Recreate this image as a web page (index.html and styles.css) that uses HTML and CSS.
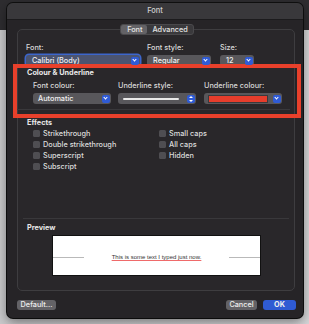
FILE: index.html
```html
<!doctype html>
<html>
<head>
<meta charset="utf-8">
<title>Font</title>
<link rel="stylesheet" href="styles.css">
</head>
<body>
<div class="window">
	<div class="titlebar">Font</div>
	<div class="content">
		<div class="tabs">
			<span class="tab on">Font</span>
			<span class="tab">Advanced</span>
		</div>
		<div class="panel">
			<div class="fonts">
				<div class="field f-font">
					<div class="label">Font:</div>
					<div class="popup focus"><span>Calibri (Body)</span><i class="chev"></i></div>
				</div>
				<div class="field f-style">
					<div class="label">Font style:</div>
					<div class="popup"><span>Regular</span><i class="chev"></i></div>
				</div>
				<div class="field f-size">
					<div class="label">Size:</div>
					<div class="popup"><span>12</span><i class="chev"></i></div>
				</div>
			</div>

			<div class="colour">
				<div class="head">Colour &amp; Underline</div>
				<div class="cols">
					<div class="field">
						<div class="label">Font colour:</div>
						<div class="popup"><span>Automatic</span><i class="chev"></i></div>
					</div>
					<div class="field">
						<div class="label">Underline style:</div>
						<div class="popup"><b class="uline"></b><i class="step"></i></div>
					</div>
					<div class="field">
						<div class="label">Underline colour:</div>
						<div class="popup"><b class="swatch"></b><i class="chev"></i></div>
					</div>
				</div>
				<div class="sep"></div>
			</div>

			<div class="head">Effects</div>
			<div class="effects">
				<ul>
					<li><i class="cb"></i>Strikethrough</li>
					<li><i class="cb"></i>Double strikethrough</li>
					<li><i class="cb"></i>Superscript</li>
					<li><i class="cb"></i>Subscript</li>
				</ul>
				<ul>
					<li><i class="cb"></i>Small caps</li>
					<li><i class="cb"></i>All caps</li>
					<li><i class="cb"></i>Hidden</li>
				</ul>
			</div>

			<div class="sep wide"></div>
			<div class="head">Preview</div>
			<div class="preview">
				<i class="rule"></i>
				<span class="sample">This is some text I typed just now.</span>
				<i class="rule"></i>
			</div>
		</div>
		<div class="buttons">
			<span class="btn">Default...</span>
			<span class="spacer"></span>
			<span class="btn">Cancel</span>
			<span class="btn ok">OK</span>
		</div>
	</div>
</div>
</body>
</html>
```

FILE: styles.css
```css
*{ margin:0; padding:0; box-sizing:border-box; list-style:none;}
html,body{ height:100%;}
body{ background:linear-gradient(90deg,#c9c9cb 0,#d6d6d8 100%); font-family:"Inter","Liberation Sans",sans-serif; font-size:7.3px; font-weight:500; color:#dedede; padding:3px 6px 0 7px; overflow:hidden; position:relative;}
body:before{ content:""; position:absolute; left:0; top:0; right:0; height:30px; background:#2e2d30; z-index:0;}

.window{ position:relative; z-index:1; width:296px; height:315px; background:#262427; border-radius:6px; box-shadow:0 4px 12px rgba(0,0,0,.45), 0 0 0 1px #111; overflow:hidden; display:flex; flex-direction:column;}
.titlebar{ height:17px; line-height:16px; background:#39383b; text-align:center; color:#cfcfcf; font-size:7.5px; border-bottom:1px solid #1c1b1d;}
.content{ flex:1; padding:0 8px 0 10px; display:flex; flex-direction:column;}

.tabs{ position:relative; z-index:2; align-self:center; margin:4px 0 0 2px; display:flex; height:11px; background:#3a393c; border:1px solid #4a494c; border-radius:3px;}
.tab{ padding:0 5px; line-height:9px; color:#e4e4e4;}
.tab.on{ background:#636266; border-radius:2px; padding:0 5px 0 6px;}

.panel{ margin-top:-6px; height:262px; border:1px solid #3e3d40; border-radius:5px; background:#29272a; padding:13px 9px 0 9px;}

.label{ height:9px; line-height:9px; margin-bottom:3px; color:#d9d9d9;}
.popup{ height:11px; border-radius:3px; background:#58575b; display:flex; align-items:center; padding:0 1.5px 0 6px; color:#f0f0f0;}
.popup span{ flex:1; white-space:nowrap;}
.popup.focus{ background:#4b5470; box-shadow:0 0 0 1.5px #3c66cc;}
.chev{ width:8px; height:8px; border-radius:2px; background:#2f5bd6; position:relative;}
.chev:after{ content:""; position:absolute; left:2.5px; top:1.5px; width:2px; height:2px; border-right:1px solid #fff; border-bottom:1px solid #fff; transform:rotate(45deg);}

.fonts{ display:flex; margin-left:-1px;}
.f-font{ width:114px;}
.f-style{ width:64px; margin-left:7px;}
.f-size{ width:34px; margin-left:9px;}

.colour{ margin:2px -12px 0 -10px; height:46px; outline:4px solid #e8402b; padding:0 0 0 10px;}
.head{ height:9px; line-height:9px; font-weight:bold; color:#e8e8e8;}
.colour .head{ margin-bottom:4px;}
.cols{ display:flex; padding-left:6px;}
.cols .field{ width:78px; margin-right:8px;}
.cols .field:first-child{ margin-right:7px;}
.cols .popup{ padding-left:5px;}
.uline{ flex:1; height:2px; background:#e9e9e9; margin-right:8px; border-radius:1px;}
.swatch{ flex:1; height:6px; background:#e63d2c; margin:0 6px 0 0; outline:1px solid #3a393c;}
.step{ width:8px; height:8px; border-radius:2px; background:#2f5bd6; position:relative;}
.step:before,.step:after{ content:""; position:absolute; left:2px; border-left:2px solid transparent; border-right:2px solid transparent;}
.step:before{ top:1px; border-bottom:2px solid #fff;}
.step:after{ bottom:1px; border-top:2px solid #fff;}
.sep{ height:1px; background:#39383b; margin:5px 7px 0 -10px;}

.colour + .head{ margin-top:4px;}
.effects{ display:flex; padding:1px 0 0 6px; height:91px;}
.effects ul{ width:128px;}
.effects li{ height:11px; display:flex; align-items:center; color:#dcdcdc; white-space:nowrap;}
.cb{ width:7px; height:7px; border-radius:1.5px; background:#4f4e52; margin-right:3px;}

.sep.wide{ margin:0 -4px 4px -4px;}
.preview{ margin:3px 24px 0 25px; height:41px; background:#fff; border:1px solid #111; display:flex; align-items:center; padding-top:3px;}
.rule{ width:31px; height:1px; background:#b9b9b9;}
.sample{ flex:1; text-align:center; font-family:"Liberation Sans",sans-serif; font-weight:normal; font-size:6px; color:#333; text-decoration:underline; text-decoration-color:#ef6a6a; text-underline-offset:1px;}

.buttons{ display:flex; margin:9px 0 0 0;}
.spacer{ flex:1;}
.btn{ height:10px; line-height:10px; border-radius:3px; background:#636266; color:#eee; text-align:center; width:39px;}
.btn + .btn{ margin-left:6px;}
.btn.ok{ width:33px; background:#2f5bd3; font-weight:bold; margin-right:-1px;}
.spacer + .btn{ width:31px; margin-left:0;}
```
